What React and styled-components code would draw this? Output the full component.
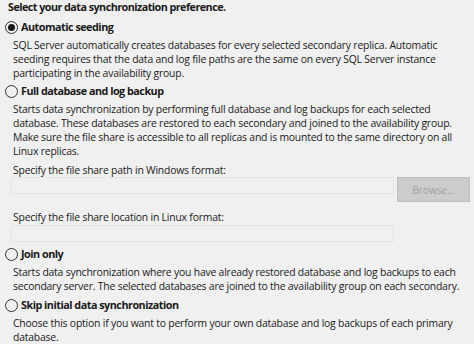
import styled, { createGlobalStyle } from "styled-components";

const GlobalStyle = createGlobalStyle`
  html, body {
    margin: 0;
    padding: 0;
    background: #f0f0f0;
  }
  body {
    font-family: "Open Sans", "Noto Sans", sans-serif;
    font-size: 10.4px;
    letter-spacing: -0.2px;
    color: #1a1a1a;
  }
`;

const Page = styled.div`
  width: 474px;
  height: 344px;
  overflow: hidden;
  padding: 0 0 0 8px;
  box-sizing: border-box;
  line-height: 14px;
`;

const Title = styled.div`
  font-weight: 700;
  font-size: 10.8px;
  letter-spacing: -0.55px;
  height: 14px;
`;

const Option = styled.label`
  display: flex;
  align-items: center;
  gap: 3px;
  margin-left: -3px;
  margin-top: ${(p) => p.$top}px;
  font-weight: 700;
  font-size: 10.8px;
  letter-spacing: -0.5px;
  height: 14px;
  cursor: default;
`;

const Radio = styled.span`
  width: 11px;
  height: 11px;
  border: 1px solid #333;
  border-radius: 50%;
  display: flex;
  align-items: center;
  justify-content: center;
  flex-shrink: 0;

  &::after {
    content: "";
    display: ${(p) => (p.$checked ? "block" : "none")};
    width: 7px;
    height: 7px;
    border-radius: 50%;
    background: #1a1a1a;
  }
`;

const Desc = styled.p`
  margin: 4px 0 0 5px;
  white-space: nowrap;
`;

const Label = styled.div`
  margin: ${(p) => p.$top}px 0 0 5px;
`;

const FieldRow = styled.div`
  display: flex;
  align-items: flex-start;
  gap: 3px;
  margin-left: 3px;
`;

const Field = styled.div`
  width: 381px;
  height: 15px;
  border: 1px solid #e4e4e4;
  background: #f0f0f0;
  margin-top: ${(p) => p.$top || 0}px;
  margin-left: ${(p) => p.$left || 0}px;
`;

const BrowseButton = styled.button`
  width: 73px;
  height: 25px;
  background: #cccccc;
  border: 1px solid #bfbfbf;
  color: #a3a3a3;
  font-family: inherit;
  font-size: 10.4px;
  letter-spacing: -0.2px;
  padding: 0;
`;

export default function App() {
  return (
    <>
      <GlobalStyle />
      <Page>
        <Title>Select your data synchronization preference.</Title>

        <Option $top={6}>
          <Radio $checked />
          Automatic seeding
        </Option>
        <Desc>
          SQL Server automatically creates databases for every selected secondary replica. Automatic
          <br />
          seeding requires that the data and log file paths are the same on every SQL Server instance
          <br />
          participating in the availability group.
        </Desc>

        <Option $top={4}>
          <Radio />
          Full database and log backup
        </Option>
        <Desc>
          Starts data synchronization by performing full database and log backups for each selected
          <br />
          database. These databases are restored to each secondary and joined to the availability group.
          <br />
          Make sure the file share is accessible to all replicas and is mounted to the same directory on all
          <br />
          Linux replicas.
        </Desc>
        <Label $top={5}>Specify the file share path in Windows format:</Label>
        <FieldRow>
          <Field />
          <BrowseButton disabled>Browse...</BrowseButton>
        </FieldRow>
        <Label $top={8}>Specify the file share location in Linux format:</Label>
        <Field $top={1} $left={3} />

        <Option $top={5}>
          <Radio />
          Join only
        </Option>
        <Desc>
          Starts data synchronization where you have already restored database and log backups to each
          <br />
          secondary server. The selected databases are joined to the availability group on each secondary.
        </Desc>

        <Option $top={5}>
          <Radio />
          Skip initial data synchronization
        </Option>
        <Desc>
          Choose this option if you want to perform your own database and log backups of each primary
          <br />
          database.
        </Desc>
      </Page>
    </>
  );
}
